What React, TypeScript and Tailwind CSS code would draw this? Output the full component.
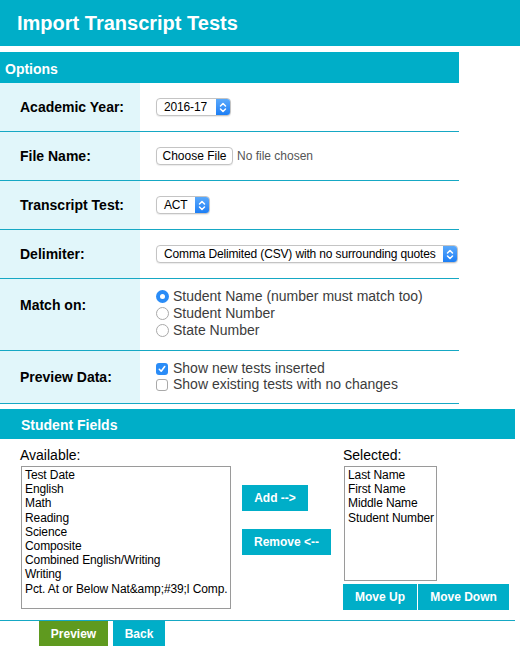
import React from "react";

const TEAL = "bg-[#00aec8]";

function Chevrons() {
  return (
    <svg width="8" height="11" viewBox="0 0 8 11" fill="none" stroke="white" strokeWidth="1.5" strokeLinecap="round" strokeLinejoin="round">
      <path d="M1.5 4 L4 1.5 L6.5 4" />
      <path d="M1.5 7 L4 9.5 L6.5 7" />
    </svg>
  );
}

function Select({ value, width }: { value: string; width: string }) {
  return (
    <div className={`flex h-[18px] ${width} items-stretch rounded-[4px] border border-[#c4c4c4] bg-white shadow-[0_1px_1px_rgba(0,0,0,0.08)] overflow-hidden`}>
      <div className="flex-1 pl-[7px] text-[12px] leading-[16px] tracking-[-0.15px] text-black whitespace-nowrap overflow-hidden">{value}</div>
      <div className="flex w-[14px] shrink-0 items-center justify-center bg-gradient-to-b from-[#5aa9fb] to-[#1a7ef5]">
        <Chevrons />
      </div>
    </div>
  );
}

function Row({
  label,
  h,
  children,
  labelCls = "items-center",
  contentCls = "items-center",
}: {
  label: string;
  h: string;
  children: React.ReactNode;
  labelCls?: string;
  contentCls?: string;
}) {
  return (
    <div className={`flex ${h} border-b border-[#16a8c4]`}>
      <div className={`flex w-[140px] ${labelCls} bg-[#e1f6fa] pl-[20px] text-[14px] font-bold text-black`}>{label}</div>
      <div className={`flex flex-1 ${contentCls} pl-[16px]`}>{children}</div>
    </div>
  );
}

function Radio({ checked, label }: { checked?: boolean; label: string }) {
  return (
    <div className="flex h-[17px] items-center">
      {checked ? (
        <span className="flex h-[13px] w-[13px] items-center justify-center rounded-full bg-[#2a8cf7]">
          <span className="h-[5px] w-[5px] rounded-full bg-white" />
        </span>
      ) : (
        <span className="h-[13px] w-[13px] rounded-full border border-[#a9a9a9] bg-white" />
      )}
      <span className="ml-[4px] text-[14px] text-[#3c3c3c]">{label}</span>
    </div>
  );
}

function Check({ checked, label }: { checked?: boolean; label: string }) {
  return (
    <div className="flex h-[16px] items-center">
      {checked ? (
        <span className="flex h-[12px] w-[12px] items-center justify-center rounded-[3px] bg-[#2a8cf7]">
          <svg width="8" height="8" viewBox="0 0 8 8" fill="none" stroke="white" strokeWidth="1.6" strokeLinecap="round" strokeLinejoin="round">
            <path d="M1.3 4.3 L3.2 6.2 L6.7 1.5" />
          </svg>
        </span>
      ) : (
        <span className="h-[12px] w-[12px] rounded-[3px] border border-[#a9a9a9] bg-white" />
      )}
      <span className="ml-[5px] text-[14px] text-[#3c3c3c]">{label}</span>
    </div>
  );
}

function TealBtn({ children, w }: { children: React.ReactNode; w: string }) {
  return (
    <div className={`flex h-[26px] ${w} items-center justify-center ${TEAL} text-[12px] font-bold text-white whitespace-nowrap`}>{children}</div>
  );
}

export default function App() {
  const available = [
    "Test Date",
    "English",
    "Math",
    "Reading",
    "Science",
    "Composite",
    "Combined English/Writing",
    "Writing",
    "Pct. At or Below Nat&amp;#39;l Comp.",
  ];
  const selected = ["Last Name", "First Name", "Middle Name", "Student Number"];
  return (
    <div className="w-[520px] h-[654px] bg-white font-['Liberation_Sans',Arial,sans-serif] text-black overflow-hidden">
      <div className={`flex h-[46px] items-center ${TEAL} pl-[17px] text-[20px] font-bold text-white`}>Import Transcript Tests</div>

      <div className="mt-[6px] w-[459px]">
        <div className={`flex h-[31px] items-center pt-[3px] ${TEAL} pl-[5px] text-[14px] font-bold text-white`}>Options</div>
        <Row label="Academic Year:" h="h-[49px]">
          <Select value="2016-17" width="w-[75px]" />
        </Row>
        <Row label="File Name:" h="h-[49px]">
          <div className="flex items-center">
            <div className="flex h-[18px] w-[77px] items-center justify-center rounded-[4px] border border-[#c4c4c4] bg-white text-[12px] text-black shadow-[0_1px_1px_rgba(0,0,0,0.08)]">Choose File</div>
            <span className="ml-[4px] text-[12px] text-[#555]">No file chosen</span>
          </div>
        </Row>
        <Row label="Transcript Test:" h="h-[49px]">
          <Select value="ACT" width="w-[54px]" />
        </Row>
        <Row label="Delimiter:" h="h-[49px]">
          <Select value="Comma Delimited (CSV) with no surrounding quotes" width="w-[302px]" />
        </Row>
        <Row label="Match on:" h="h-[72px]" labelCls="items-start pt-[16px]" contentCls="items-start pt-[9px]">
          <div className="flex flex-col">
            <Radio checked label="Student Name (number must match too)" />
            <Radio label="Student Number" />
            <Radio label="State Number" />
          </div>
        </Row>
        <Row label="Preview Data:" h="h-[53px]">
          <div className="flex flex-col pb-[1px]">
            <Check checked label="Show new tests inserted" />
            <Check label="Show existing tests with no changes" />
          </div>
        </Row>
      </div>

      <div className={`mt-[5px] flex h-[30px] w-[515px] items-center pt-[3px] ${TEAL} pl-[21px] text-[14px] font-bold text-white`}>Student Fields</div>

      <div className="flex pl-[20px] pt-[8px]">
        <div className="w-[211px]">
          <div className="h-[16px] text-[14px] leading-[16px]">Available:</div>
          <div className="ml-px mt-[3px] h-[143px] w-[210px] overflow-hidden border border-[#9a9a9a] pl-[3px] pt-px">
            {available.map((a) => (
              <div key={a} className="whitespace-nowrap text-[12px] leading-[14.2px] tracking-[-0.1px]">{a}</div>
            ))}
          </div>
        </div>
        <div className="ml-[11px] flex w-[101px] flex-col pt-[38px]">
          <TealBtn w="w-[66px]">Add --&gt;</TealBtn>
          <div className="mt-[18px]">
            <TealBtn w="w-[89px]">Remove &lt;--</TealBtn>
          </div>
        </div>
        <div>
          <div className="h-[16px] text-[14px] leading-[16px]">Selected:</div>
          <div className="ml-px mt-[3px] h-[115px] w-[93px] overflow-hidden border border-[#9a9a9a] pl-[3px] pt-px">
            {selected.map((a) => (
              <div key={a} className="whitespace-nowrap text-[12px] leading-[14.2px] tracking-[-0.1px]">{a}</div>
            ))}
          </div>
          <div className="mt-[3px] flex gap-px">
            <TealBtn w="w-[74px]">Move Up</TealBtn>
            <TealBtn w="w-[91px]">Move Down</TealBtn>
          </div>
        </div>
      </div>

      <div className="mt-[10px] flex w-[515px] border-t border-[#16a8c4] pl-[39px]">
        <div className="flex h-[25px] w-[69px] items-center justify-center bg-[#5f9a1f] text-[12px] font-bold text-white">Preview</div>
        <div className={`ml-[5px] flex h-[25px] w-[52px] items-center justify-center ${TEAL} text-[12px] font-bold text-white`}>Back</div>
      </div>
    </div>
  );
}
